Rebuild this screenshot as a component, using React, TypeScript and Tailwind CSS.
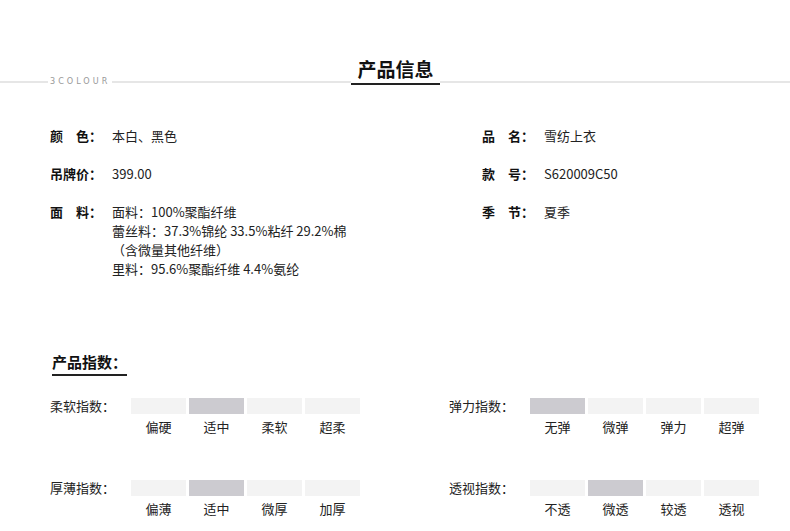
const F = { fontFamily: '"Noto Sans CJK SC", "Liberation Sans", sans-serif' };

function Bars({ label, opts, sel }: { label: string; opts: string[]; sel: number }) {
  return (
    <div className="flex">
      <div className="w-[81px] text-[13px] leading-[16px] text-[#222]">{label}</div>
      <div>
        <div className="flex gap-[3px]">
          {opts.map((o, i) => (
            <div key={o} className={`w-[55px] h-[16px] ${i === sel ? 'bg-[#cccbd0]' : 'bg-[#f3f3f3]'}`} />
          ))}
        </div>
        <div className="flex gap-[3px] mt-[4px]">
          {opts.map((o) => (
            <div key={o} className="w-[55px] text-center text-[13px] leading-[18px] text-[#222]">{o}</div>
          ))}
        </div>
      </div>
    </div>
  );
}

function Row({ k, children }: { k: React.ReactNode; children: React.ReactNode }) {
  return (
    <div className="flex text-[13px] leading-[19px]">
      <div className="w-[62px] font-bold text-[#111] flex">{k}</div>
      <div className="text-[#222]">{children}</div>
    </div>
  );
}

export default function App() {
  return (
    <div className="w-[790px] h-[531px] bg-white overflow-hidden relative" style={F}>
      <div className="relative h-[90px]">
        <div className="absolute left-0 right-0 top-[81px] h-[2px] bg-[#e6e6e6]" />
        <div className="absolute left-[48px] top-[76px] px-[2px] bg-white text-[9px] leading-[10px] tracking-[3px] text-[#999]" style={{ fontFamily: '"DejaVu Sans Condensed", sans-serif' }}>3COLOUR</div>
        <div className="absolute left-[351px] top-[56px] w-[89px] text-center text-[19px] leading-[26px] font-bold text-[#111] border-b-[2px] border-[#222] pb-[1px] bg-white">产品信息</div>
      </div>
      <div className="flex pl-[50px] pt-[36px]">
        <div className="w-[432px] flex flex-col gap-[19px]">
          <Row k={<><span>颜</span><span className="ml-[13px]">色：</span></>}>本白、黑色</Row>
          <Row k="吊牌价：">399.00</Row>
          <Row k={<><span>面</span><span className="ml-[13px]">料：</span></>}>
            <div>面料：100%聚酯纤维</div>
            <div>蕾丝料：37.3%锦纶 33.5%粘纤 29.2%棉</div>
            <div>（含微量其他纤维）</div>
            <div>里料：95.6%聚酯纤维 4.4%氨纶</div>
          </Row>
        </div>
        <div className="flex flex-col gap-[19px]">
          <Row k={<><span>品</span><span className="ml-[13px]">名：</span></>}>雪纺上衣</Row>
          <Row k={<><span>款</span><span className="ml-[13px]">号：</span></>}>S620009C50</Row>
          <Row k={<><span>季</span><span className="ml-[13px]">节：</span></>}>夏季</Row>
        </div>
      </div>
      <div className="pl-[52px] mt-[71px]">
        <div className="inline-block text-[15px] leading-[20px] font-bold text-[#111] border-b-[2px] border-[#222] pb-[2px]">产品指数：</div>
      </div>
      <div className="pl-[50px] mt-[22px] flex flex-col gap-[44px]">
        <div className="flex">
          <div className="w-[399px]"><Bars label="柔软指数：" opts={['偏硬', '适中', '柔软', '超柔']} sel={1} /></div>
          <Bars label="弹力指数：" opts={['无弹', '微弹', '弹力', '超弹']} sel={0} />
        </div>
        <div className="flex">
          <div className="w-[399px]"><Bars label="厚薄指数：" opts={['偏薄', '适中', '微厚', '加厚']} sel={1} /></div>
          <Bars label="透视指数：" opts={['不透', '微透', '较透', '透视']} sel={1} />
        </div>
      </div>
    </div>
  );
}
